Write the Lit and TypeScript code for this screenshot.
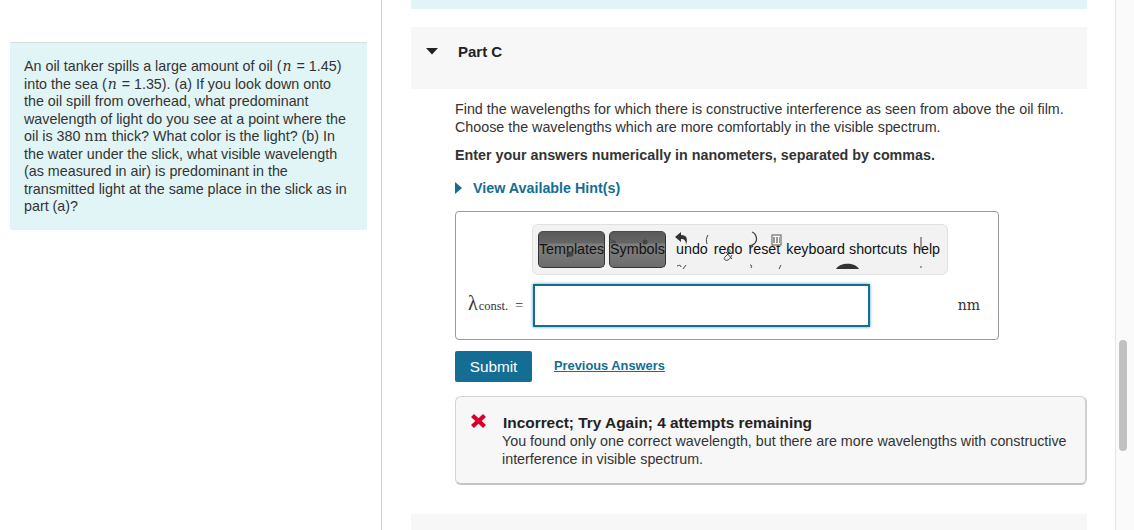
import { LitElement, html, css, svg } from 'lit';
import { customElement } from 'lit/decorators.js';

@customElement('app-root')
export class AppRoot extends LitElement {
  static styles = css`
    :host {
      display: flex;
      width: 1134px;
      height: 530px;
      overflow: hidden;
      font-family: 'Liberation Sans', Arial, sans-serif;
      font-size: 14.3px;
      line-height: 17.5px;
      color: #333;
      background: #fff;
    }

    /* left column */
    .side {
      width: 382px;
      flex: none;
      box-sizing: border-box;
      padding: 42px 14px 0 10px;
      border-right: 1px solid #d0d0d0;
    }
    .intro {
      background: #e2f5f6;
      border-top: 1px solid #d5dfe0;
      padding: 15px 0 14px 14px;
      height: 188px;
      box-sizing: border-box;
      white-space: nowrap;
    }
    .math {
      font-family: 'DejaVu Serif', 'Liberation Serif', serif;
      font-size: 14px;
      letter-spacing: 0.5px;
    }
    .math-i {
      font-family: 'DejaVu Serif', 'Liberation Serif', serif;
      font-style: italic;
      font-size: 14px;
      margin: 0 1px;
    }

    /* right column */
    .main {
      flex: 1;
      padding: 0 28px 0 29px;
      min-width: 0;
    }
    .top-strip {
      height: 9px;
      background: #e2f5f6;
    }
    .part-head {
      margin-top: 18px;
      height: 62px;
      background: #f7f7f7;
      display: flex;
      align-items: flex-start;
      padding: 16px 0 0 15px;
      box-sizing: border-box;
      font-weight: bold;
      font-size: 15px;
      color: #222;
    }
    .part-head svg {
      margin: 5px 20px 0 0;
    }
    .body {
      padding: 12px 0 0 44px;
    }
    .body p {
      margin: 0;
    }
    .body p + p {
      margin-top: 11px;
    }
    .hint {
      display: flex;
      align-items: center;
      gap: 11px;
      margin-top: 15px;
      color: #146e93;
      font-weight: bold;
    }

    /* answer box */
    .answer {
      width: 544px;
      height: 129px;
      margin-top: 14px;
      box-sizing: border-box;
      border: 1px solid #999;
      border-radius: 4px;
      padding: 12px 18px 0 12px;
    }
    .toolbar-row {
      display: flex;
      padding-left: 64px;
    }
    .toolbar {
      position: relative;
      width: 416px;
      height: 51px;
      box-sizing: border-box;
      border: 1px solid #e0e0e0;
      border-radius: 6px;
      background: #f2f2f2;
      display: flex;
      align-items: center;
      padding: 0 0 0 5px;
      color: #111;
      white-space: nowrap;
      overflow: hidden;
    }
    .tool {
      box-sizing: border-box;
      height: 37px;
      border: 1px solid #333;
      border-top-color: #4a4a4a;
      border-radius: 5px;
      background: linear-gradient(#5a5a5a 0, #656565 30%, #808080 36%, #6c6c6c 100%);
      display: flex;
      align-items: center;
      justify-content: center;
      margin-right: 4px;
    }
    .tool.templates {
      width: 67px;
    }
    .tool.symbols {
      width: 57px;
    }
    .plain {
      margin-left: 6px;
    }
    .sprite {
      position: absolute;
      left: 0;
      top: 0;
      pointer-events: none;
    }
    .input-row {
      display: flex;
      align-items: center;
      margin-top: 9px;
    }
    .label {
      width: 65px;
      flex: none;
      font-family: 'Liberation Serif', serif;
      font-size: 12.500px;
      display: flex;
      align-items: baseline;
      white-space: nowrap;
    }
    .label .lambda {
      font-size: 20px;
      margin-right: 1px;
    }
    .label .eq {
      margin-left: 7px;
      font-size: 14px;
    }
    .input {
      width: 337px;
      height: 43px;
      box-sizing: border-box;
      border: 2px solid #146e93;
      box-shadow: 0 0 3px #4a9dc0;
      background: #fff;
    }
    .unit {
      margin-left: auto;
      font-family: 'DejaVu Serif', 'Liberation Serif', serif;
      font-size: 14px;
    }

    /* submit */
    .actions {
      display: flex;
      align-items: center;
      margin-top: 11px;
      gap: 22px;
    }
    .submit {
      width: 77px;
      height: 31px;
      background: #146e93;
      color: #fff;
      border-radius: 2px;
      display: flex;
      align-items: center;
      justify-content: center;
      font-size: 15.300px;
    }
    .prev {
      color: #146e93;
      font-weight: bold;
      font-size: 12.850px;
      margin-bottom: 2px;
      text-decoration: underline;
    }

    /* feedback */
    .feedback {
      margin: 14px 0 0 44px;
      height: 89px;
      box-sizing: border-box;
      background: #f7f7f7;
      border: 1px solid #d4d4d4;
      border-bottom: 2px solid #c4c4c4;
      border-right: 2px solid #d0d0d0;
      border-radius: 6px;
      display: grid;
      grid-template-columns: 31px 1fr;
      padding: 17px 12px 0 15px;
      line-height: 18px;
    }
    .feedback strong {
      display: block;
      color: #222;
      font-size: 15.400px;
      margin-left: 1px;
    }
    .next-strip {
      height: 16px;
      margin-top: 29px;
      background: #f7f7f7;
    }

    /* scrollbar */
    .scroll {
      width: 19px;
      flex: none;
      box-sizing: border-box;
      border-left: 1px solid #e6e6e6;
      background: #fafafa;
      padding: 340px 0 0 3px;
    }
    .thumb {
      width: 8px;
      height: 111px;
      border-radius: 4px;
      background: #c1c1c1;
    }
  `;

  // the broken editor sprites poking through the toolbar labels
  private _sprites() {
    return svg`
      <g fill="none" stroke="#444" stroke-width="1">
        <path d="M35 26c-2 3 0 6 3 5" />
        <path d="M76 14l7 3-7 1" />
        <path d="M175 10c-2 3-2 6-1 9" />
        <path d="M194 24c3 0 4 2 2 4l-4 4c-2 2 0 4 3 3 2-1 3-3 4-5M193 27l6 7" />
        <path d="M219 7c5 2 6 9 2 12-1 1-3 2-5 2" stroke-width="1.300" />
        <path d="M144 41c2-1 4-1 4 1M153 40l-3 4" />
        <path d="M217 40c2 0 2 1 1 3" />
        <path d="M248 40l-2 4" />
        <path d="M388 12v13" />
      </g>
      <circle cx="38" cy="29" r="2.500" fill="#444" />
      <circle cx="112" cy="17" r="2.500" fill="#444" />
      <path d="M148 7l-6 5 6 5v-3c3 0 5 1 5 6 2-6 1-10-5-10z" fill="#333" />
      <rect x="239" y="10" width="9" height="10" fill="#fff" stroke="#555" />
      <path d="M240 13h7M240 15h7M240 17h7" stroke="#333" stroke-dasharray="2 1" />
      <path d="M303 44c4-7 19-7 23 0z" fill="#333" />
      <circle cx="388" cy="42" r="0.800" fill="#333" />
    `;
  }

  render() {
    return html`
      <aside class="side">
        <div class="intro">
          An oil tanker spills a large amount of oil (<span class="math-i">n</span> = 1.45)<br />
          into the sea (<span class="math-i">n</span> = 1.35). (a) If you look down onto<br />
          the oil spill from overhead, what predominant<br />
          wavelength of light do you see at a point where the<br />
          oil is 380 <span class="math">nm</span> thick? What color is the light? (b) In<br />
          the water under the slick, what visible wavelength<br />
          (as measured in air) is predominant in the<br />
          transmitted light at the same place in the slick as in<br />
          part (a)?
        </div>
      </aside>
      <main class="main">
        <div class="top-strip"></div>
        <div class="part-head">
          <svg width="12" height="7" viewBox="0 0 12 7"><path d="M0 0h12L6 6.500z" fill="#222" /></svg>
          Part C
        </div>
        <div class="body">
          <p>
            Find the wavelengths for which there is constructive interference as seen from
            above the oil film.<br />
            Choose the wavelengths which are more comfortably in the visible spectrum.
          </p>
          <p><b>Enter your answers numerically in nanometers, separated by commas.</b></p>
          <div class="hint">
            <svg width="7" height="12" viewBox="0 0 7 12"><path d="M0 0l7 6-7 6z" fill="#146e93" /></svg>
            View Available Hint(s)
          </div>
          <div class="answer">
            <div class="toolbar-row">
              <div class="toolbar">
                <div class="tool templates">Templates</div>
                <div class="tool symbols">Symbols</div>
                <span class="plain">undo</span>
                <span class="plain">redo</span>
                <span class="plain">reset</span>
                <span class="plain">keyboard shortcuts</span>
                <span class="plain">help</span>
                <svg class="sprite" width="416" height="51">${this._sprites()}</svg>
              </div>
            </div>
            <div class="input-row">
              <div class="label">
                <span class="lambda">λ</span>const.<span class="eq">=</span>
              </div>
              <div class="input"></div>
              <div class="unit">nm</div>
            </div>
          </div>
          <div class="actions">
            <div class="submit">Submit</div>
            <div class="prev">Previous Answers</div>
          </div>
        </div>
        <div class="feedback">
          <svg width="15" height="14" viewBox="0 0 15 14">
            <path d="M0 3L3 0 7.500 4.200 12 0l3 3-4.300 4 4.300 4-3 3-4.500-4.200L3 14l-3-3 4.300-4z" fill="#d6002a" />
          </svg>
          <div>
            <strong>Incorrect; Try Again; 4 attempts remaining</strong>
            You found only one correct wavelength, but there are more wavelengths with
            constructive interference in visible spectrum.
          </div>
        </div>
        <div class="next-strip"></div>
      </main>
      <div class="scroll"><div class="thumb"></div></div>
    `;
  }
}

declare global {
  interface HTMLElementTagNameMap {
    'app-root': AppRoot;
  }
}
